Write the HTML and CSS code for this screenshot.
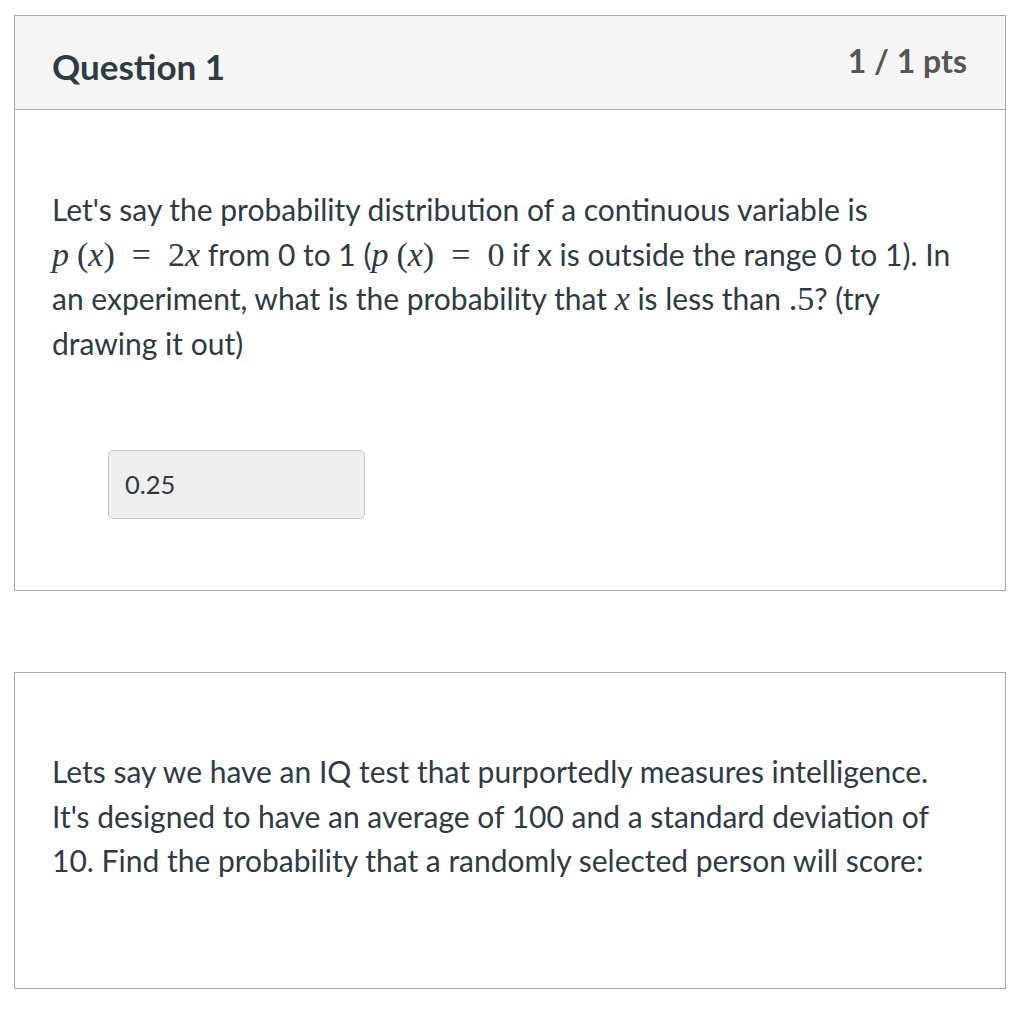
FILE: index.html
```html
<!DOCTYPE html>
<html>
<head>
<meta charset="utf-8">
<link rel="stylesheet" href="styles.css">
</head>
<body>
<div class="page">
  <section class="question">
    <header class="q-header">
      <h2 class="q-title">Question 1</h2>
      <div class="q-pts">1 / 1 pts</div>
    </header>
    <div class="q-body">
      <p class="q-text">Let's say the probability distribution of a continuous variable is <span class="math"><i>p</i><span class="sp"></span>(<i>x</i>)<span class="op">=</span>2<i>x</i></span> from 0 to 1 (<span class="math"><i>p</i><span class="sp"></span>(<i>x</i>)<span class="op">=</span>0</span> if x is outside the range 0 to 1). In an experiment, what is the probability that <span class="math"><i>x</i></span> is less than <span class="math">.5</span>? (try drawing it out)</p>
      <div class="answer">0.25</div>
    </div>
  </section>
  <section class="question second">
    <div class="q-body q-body2">
      <p class="q-text">Lets say we have an IQ test that purportedly measures intelligence. It's designed to have an average of 100 and a standard deviation of 10. Find the probability that a randomly selected person will score:</p>
    </div>
  </section>
</div>
</body>
</html>
```
FILE: styles.css
```css
html, body {
  margin: 0;
  padding: 0;
  background: #ffffff;
}
body {
  font-family: Lato, "Noto Sans", sans-serif;
  color: #2d3b45;
}
.page {
  padding: 15px 18px 0 14px;
  display: flex;
  flex-direction: column;
  gap: 81px;
}
.question {
  border: 1.5px solid #a8a8a8;
  background: #fff;
}
.q-header {
  background: #f5f5f5;
  border-bottom: 1.5px solid #a8a8a8;
  height: 93px;
  display: flex;
  justify-content: space-between;
  align-items: flex-start;
  padding: 0 38px 0 37px;
}
.q-title {
  margin: 28px 0 0 0;
  font-size: 35px;
  font-weight: 700;
  line-height: 44px;
  color: #2d3b45;
}
.q-pts {
  font-size: 32px;
  font-weight: 700;
  line-height: 44px;
  color: #555;
  margin-top: 23px;
}
.q-body {
  padding: 77px 37px 71px 37px;
}
.q-body2 {
  padding-top: 76px;
  padding-bottom: 105px;
}
.q-text {
  margin: 0;
  font-size: 30px;
  line-height: 44.5px;
  max-width: 915px;
}
.math {
  font-family: "Liberation Serif", "DejaVu Serif", serif;
  font-size: 34px;
  line-height: 0;
  white-space: nowrap;
}
.math i {
  font-style: italic;
}
.math .sp {
  display: inline-block;
  width: 8px;
}
.op {
  padding: 0 17px;
}
.answer {
  margin: 85px 0 0 56px;
  box-sizing: border-box;
  border: 1.5px solid #c8c8c8;
  border-radius: 5px;
  background: #eeeeee;
  font-size: 25.5px;
  line-height: 66px;
  padding-left: 16px;
  width: 257px;
  height: 69px;
}
```
